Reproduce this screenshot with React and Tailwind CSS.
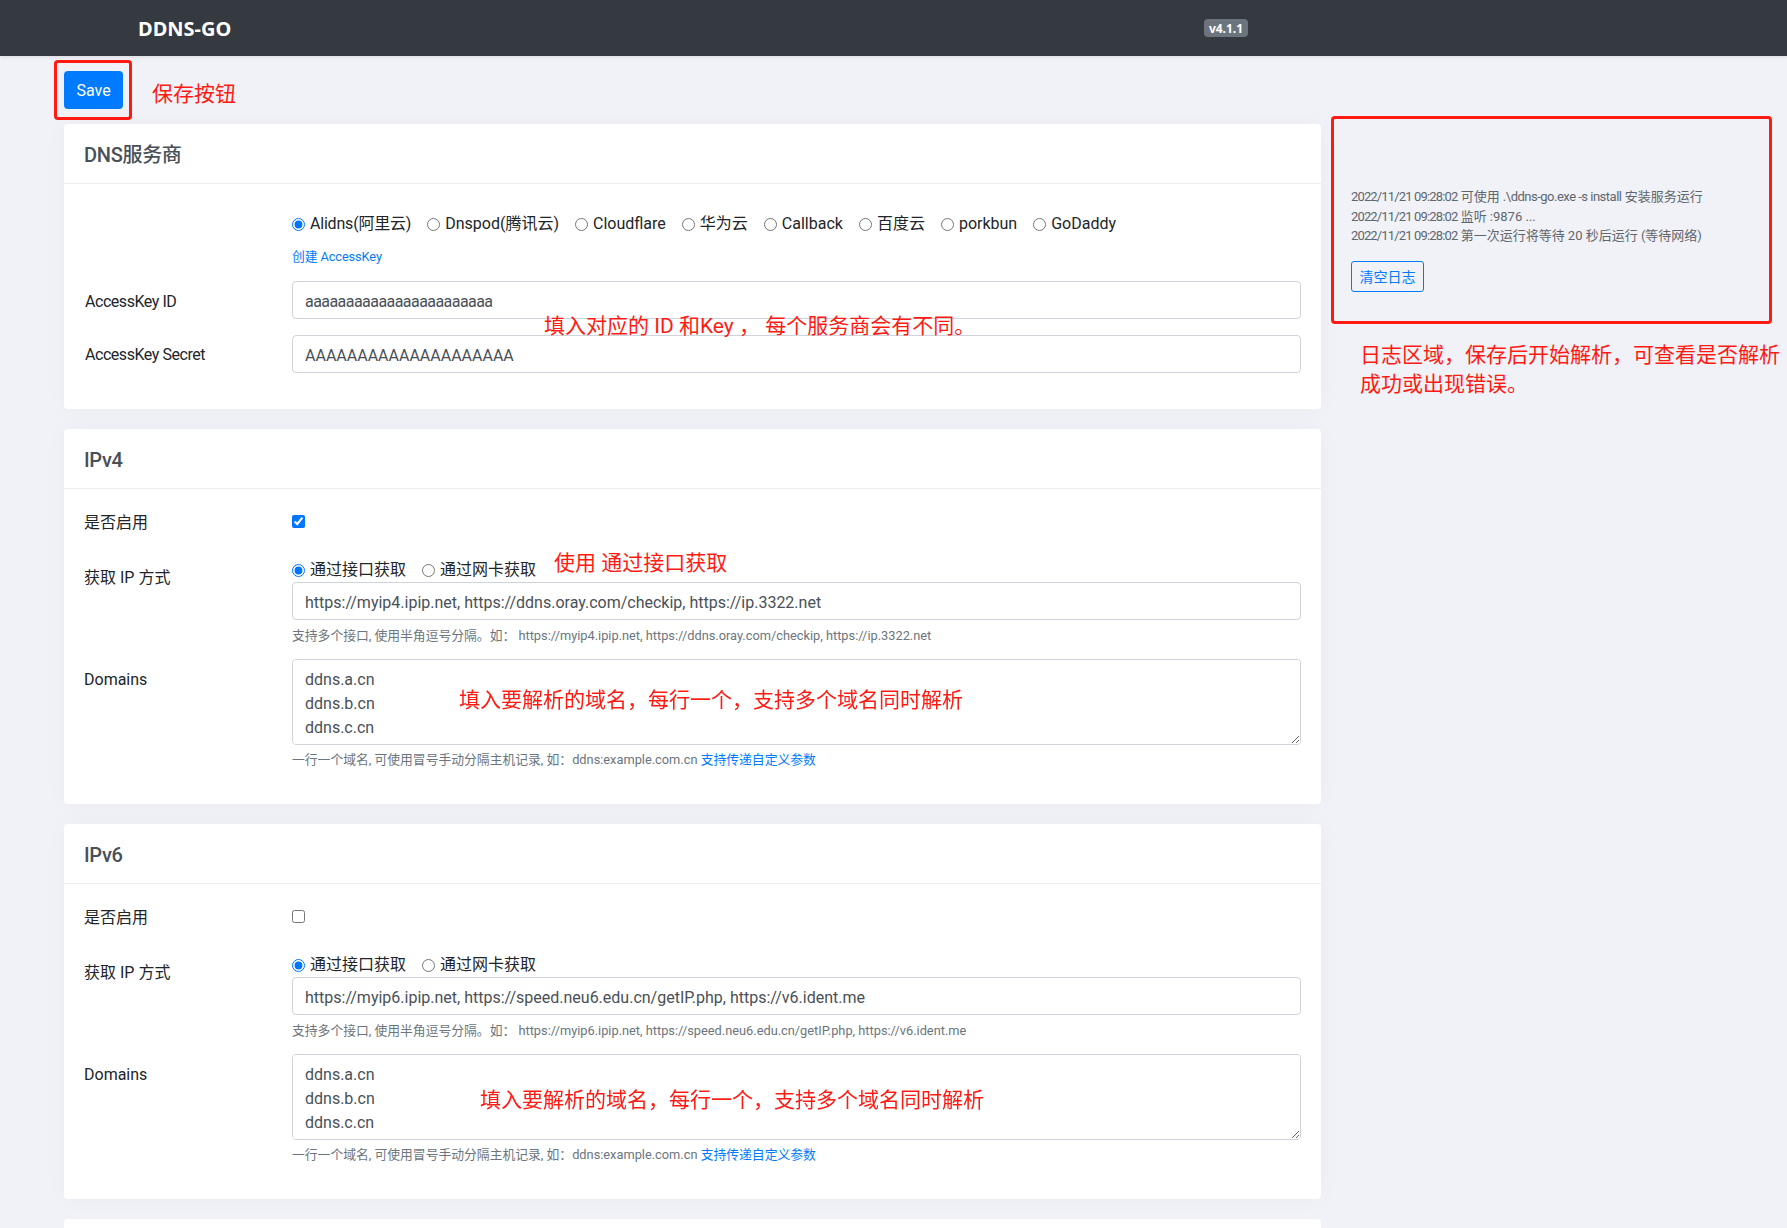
const font = 'font-["Roboto","Noto_Sans_CJK_SC",sans-serif]'
const red = 'text-[#ff1a12]'
const comma = '\uFF0C'
const colon = '\uFF1A'

const providers = ['Alidns(阿里云)', 'Dnspod(腾讯云)', 'Cloudflare', '华为云', 'Callback', '百度云', 'porkbun', 'GoDaddy']
const domainNote = `填入要解析的域名${comma}每行一个${comma}支持多个域名同时解析`

function Note({ className, children }) {
  return (
    <div className={`absolute whitespace-nowrap text-[21px] leading-[29px] text-[#ff1a12] ${className}`}>
      {children}
    </div>
  )
}

function Radio({ name, label, checked, className = '' }) {
  return (
    <label className="flex items-center gap-[5px] h-6">
      <input type="radio" name={name} defaultChecked={checked} className="w-[13px] h-[13px]" />
      <span className={className}>{label}</span>
    </label>
  )
}

function Card({ title, children }) {
  return (
    <section className="relative mb-5 rounded bg-white shadow-[0_0_24px_rgba(0,0,20,0.03)]">
      <h2 className="h-[60px] px-5 pt-[3px] flex items-center border-b border-[#eeeeee] text-[20px] font-medium tracking-[-0.3px] text-[#495057]">
        {title}
      </h2>
      {children}
    </section>
  )
}

function TextInput({ value, className = '' }) {
  return (
    <input
      readOnly
      value={value}
      className={`block w-full h-[38px] px-3 pt-[2px] border border-[#ced4da] rounded bg-white text-[#495057] outline-none ${className}`}
    />
  )
}

function LogLine({ children }) {
  return (
    <div>
      <span className="tracking-[-0.85px]">2022/11/21 09:28:02</span> {children}
    </div>
  )
}

function IpSection({ title, enabled, name, urls, noteClass }) {
  return (
    <Card title={title}>
      <div className="px-5 pt-[21px] pb-[35px]">
        <div className="grid grid-cols-[208px_1fr] h-6 mb-6">
          <div className="pt-px">是否启用</div>
          <div className="pt-[5px]">
            <input type="checkbox" defaultChecked={enabled} className="block w-[13px] h-[13px]" />
          </div>
        </div>

        <div className="grid grid-cols-[208px_1fr]">
          <div className="pt-2">获取 IP 方式</div>
          <div>
            <div className="flex gap-4">
              <Radio name={name} label="通过接口获取" checked />
              <Radio name={name} label="通过网卡获取" />
            </div>
            <TextInput value={urls} />
            <p className="mt-[6px] text-[12.8px] leading-[19px] text-[#6c757d]">
              支持多个接口, 使用半角逗号分隔。如{colon} {urls}
            </p>
          </div>
        </div>

        <div className="grid grid-cols-[208px_1fr] mt-[14px]">
          <div className="pt-[9px]">Domains</div>
          <div>
            <textarea
              readOnly
              defaultValue={'ddns.a.cn\nddns.b.cn\nddns.c.cn'}
              className="block w-full h-[86px] px-3 pt-2 pb-[6px] border border-[#ced4da] rounded bg-white text-[#495057] outline-none resize-y"
            />
            <p className="mt-[5px] text-[12.8px] leading-[19px] text-[#6c757d]">
              一行一个域名, 可使用冒号手动分隔主机记录, 如{colon}ddns:example.com.cn{' '}
              <a href="#" className="text-[#007bff]">支持传递自定义参数</a>
            </p>
          </div>
        </div>
      </div>
      <Note className={noteClass}>{domainNote}</Note>
      {name === 'ipv4' && <Note className="top-[119.5px] left-[490px]">使用 通过接口获取</Note>}
    </Card>
  )
}

export default function App() {
  return (
    <div className={`${font} h-screen overflow-hidden bg-[#f1f2f7] text-[16px] leading-6 text-[#212529]`}>
      <nav className="relative h-14 bg-[#343a40] shadow-[0_1px_4px_rgba(0,0,0,0.1)]">
        <span className='absolute left-[138px] top-[14px] font-["Noto_Sans",sans-serif] text-[20px] leading-[30px] font-bold text-white'>DDNS-GO</span>
        <span className='absolute left-[1204px] top-[19px] w-[44px] h-[18px] rounded bg-[#6c757d] text-center font-["Noto_Sans",sans-serif] text-[12px] leading-[19px] font-bold text-white'>
          v4.1.1
        </span>
      </nav>

      <main className="flex">
        <div className="w-[1321px] shrink-0 pl-16 pt-1">
          <div className="flex items-start -ml-[10px] mb-1">
            <div className="w-[78px] h-[60px] pl-[7px] pt-2 border-[3px] border-[#ff1a12] rounded">
              <button className="w-[59px] h-[38px] pt-px rounded bg-[#007bff] text-white">Save</button>
            </div>
            <span className={`ml-5 mt-[19.5px] text-[21px] leading-[29px] ${red}`}>保存按钮</span>
          </div>

          <Card title="DNS服务商">
            <div className="px-5 pt-7 pb-9">
              <div className="grid grid-cols-[208px_1fr]">
                <div />
                <div>
                  <div className="flex gap-4">
                    {providers.map((p, i) => (
                      <Radio
                        key={p}
                        name="dns"
                        label={p}
                        checked={i === 0}
                        className={i === 0 ? 'tracking-[-0.2px]' : ''}
                      />
                    ))}
                  </div>
                  <a href="#" className="block mt-[11px] text-[12.8px] leading-[19px] tracking-[-0.1px] text-[#007bff]">创建 AccessKey</a>
                </div>
              </div>
              <div className="grid grid-cols-[208px_1fr] items-center mt-[15px]">
                <div className="pl-px pt-[3px] tracking-[-0.45px]">AccessKey ID</div>
                <TextInput value="aaaaaaaaaaaaaaaaaaaaaaa" className="tracking-[-0.55px]" />
              </div>
              <div className="grid grid-cols-[208px_1fr] items-center mt-4">
                <div className="pl-px pt-[2px] tracking-[-0.45px]">AccessKey Secret</div>
                <TextInput value="AAAAAAAAAAAAAAAAAAAA" />
              </div>
            </div>
            <Note className="top-[187.5px] left-[480px]">填入对应的 ID 和Key {comma} 每个服务商会有不同。</Note>
          </Card>

          <IpSection
            title="IPv4"
            enabled
            name="ipv4"
            urls="https://myip4.ipip.net, https://ddns.oray.com/checkip, https://ip.3322.net"
            noteClass="top-[256.5px] left-[395px]"
          />
          <IpSection
            title="IPv6"
            name="ipv6"
            urls="https://myip6.ipip.net, https://speed.neu6.edu.cn/getIP.php, https://v6.ident.me"
            noteClass="top-[262px] left-[416px]"
          />
          <div className="h-20 rounded bg-white" />
        </div>

        <aside className="ml-[10px] pt-[60px]">
          <div className="w-[441px] h-[208px] pl-[17px] pt-[68px] border-[3px] border-[#ff1a12] rounded-sm">
            <div className="text-[13px] leading-[19.5px] whitespace-nowrap text-[#5f666d]">
              <LogLine>
                可使用 <span className="tracking-[-0.5px]">.\ddns-go.exe -s install</span> 安装服务运行
              </LogLine>
              <LogLine>监听 :9876 ...</LogLine>
              <LogLine>第一次运行将等待 20 秒后运行 (等待网络)</LogLine>
            </div>
            <button className="block mt-[15px] w-[73px] h-[31px] pt-px border border-[#007bff] rounded-[3px] text-[14px] text-[#007bff]">
              清空日志
            </button>
          </div>
          <p className={`mt-[17px] ml-[29px] w-[425px] text-[21px] leading-[29px] ${red}`}>
            日志区域{comma}保存后开始解析{comma}可查看是否解析成功或出现错误。
          </p>
        </aside>
      </main>
    </div>
  )
}
